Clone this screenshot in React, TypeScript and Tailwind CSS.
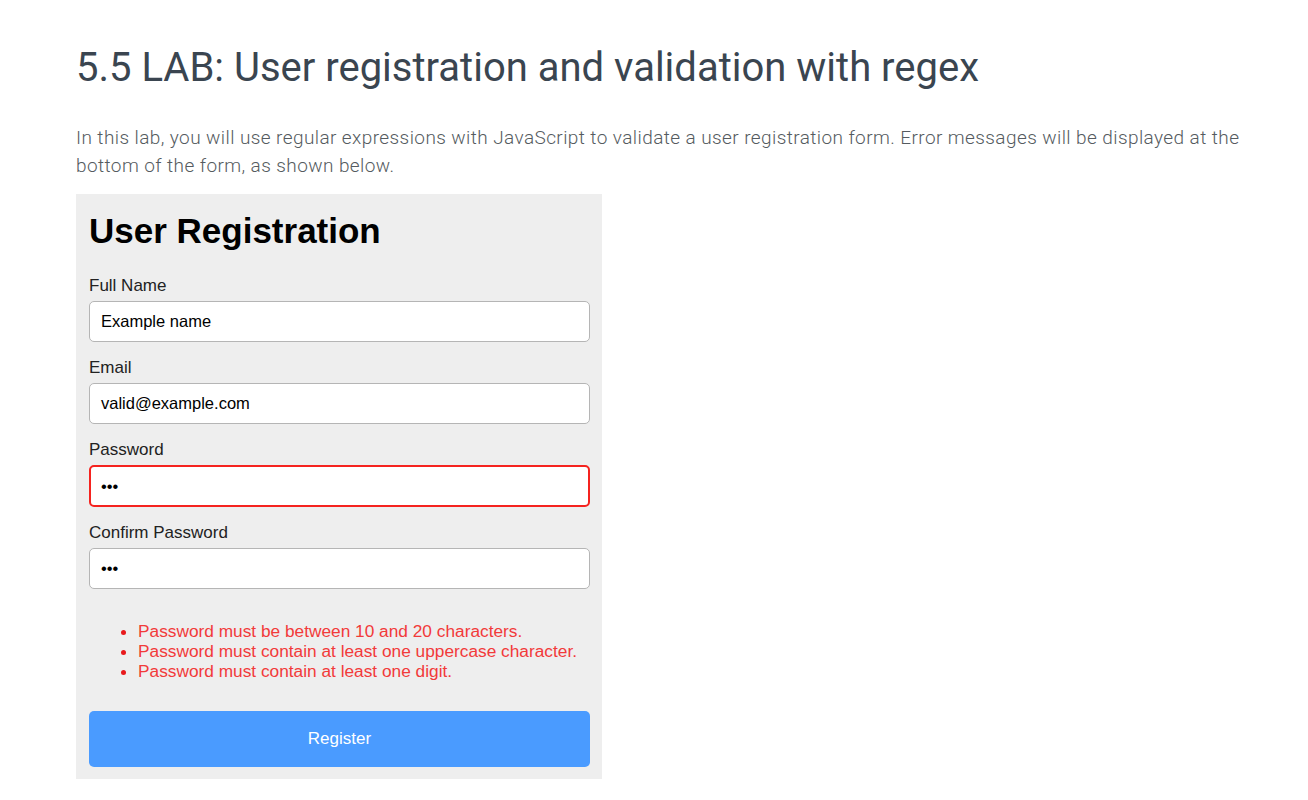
// Lab page — user registration form with regex validation errors

const fields = [
  { label: 'Full Name', value: 'Example name', invalid: false },
  { label: 'Email', value: 'valid@example.com', invalid: false },
  { label: 'Password', value: '•••', invalid: true },
  { label: 'Confirm Password', value: '•••', invalid: false },
];

const errors = [
  'Password must be between 10 and 20 characters.',
  'Password must contain at least one uppercase character.',
  'Password must contain at least one digit.',
];

export default function App() {
  return (
    <div className="min-h-screen bg-white pl-[76px] pr-[60px] pt-[40px] font-['Roboto',sans-serif]">
      {/* Header */}
      <h1 className="text-[40px] leading-[56px] font-normal text-[#3a4550]">
        5.5 LAB: User registration and validation with regex
      </h1>
      <p className="mt-[28px] text-[19px] leading-[28px] font-light tracking-[0.41px] text-[#555b60]">
        In this lab, you will use regular expressions with JavaScript to validate a user registration form. Error messages will be displayed at the bottom of the form, as shown below.
      </p>

      {/* Form */}
      <div className="mt-[14px] w-[526px] bg-[#eeeeee] pl-[13px] pr-[12px] pt-[17px] pb-[12px] font-['Liberation_Sans',Arial,sans-serif]">
        <h2 className="text-[35px] leading-[40px] font-bold text-black">User Registration</h2>

        <div className="mt-[25px] flex flex-col gap-[16px]">
          {fields.map((f) => (
            <div key={f.label}>
              <label className="block text-[17px] leading-[20px] text-[#222]">{f.label}</label>
              <div
                className={`mt-[5px] flex items-center rounded-[5px] bg-white text-[16.5px] text-black ${
                  f.invalid ? 'h-[42px] border-2 border-[#f5231f] pl-[10px]' : 'h-[41px] border border-[#b5b5b5] pl-[11px]'
                }`}
              >
                {f.value}
              </div>
            </div>
          ))}
        </div>

        {/* Errors */}
        <ul className="mt-[32px] list-disc pl-[49px] text-[17.3px] leading-[20px] text-[#f23a3a] marker:text-[#e8191c]">
          {errors.map((e) => (
            <li key={e}>{e}</li>
          ))}
        </ul>

        <button className="mt-[30px] h-[56px] w-full rounded-[5px] bg-[#4a9bff] text-[17px] text-white">
          Register
        </button>
      </div>
    </div>
  );
}
